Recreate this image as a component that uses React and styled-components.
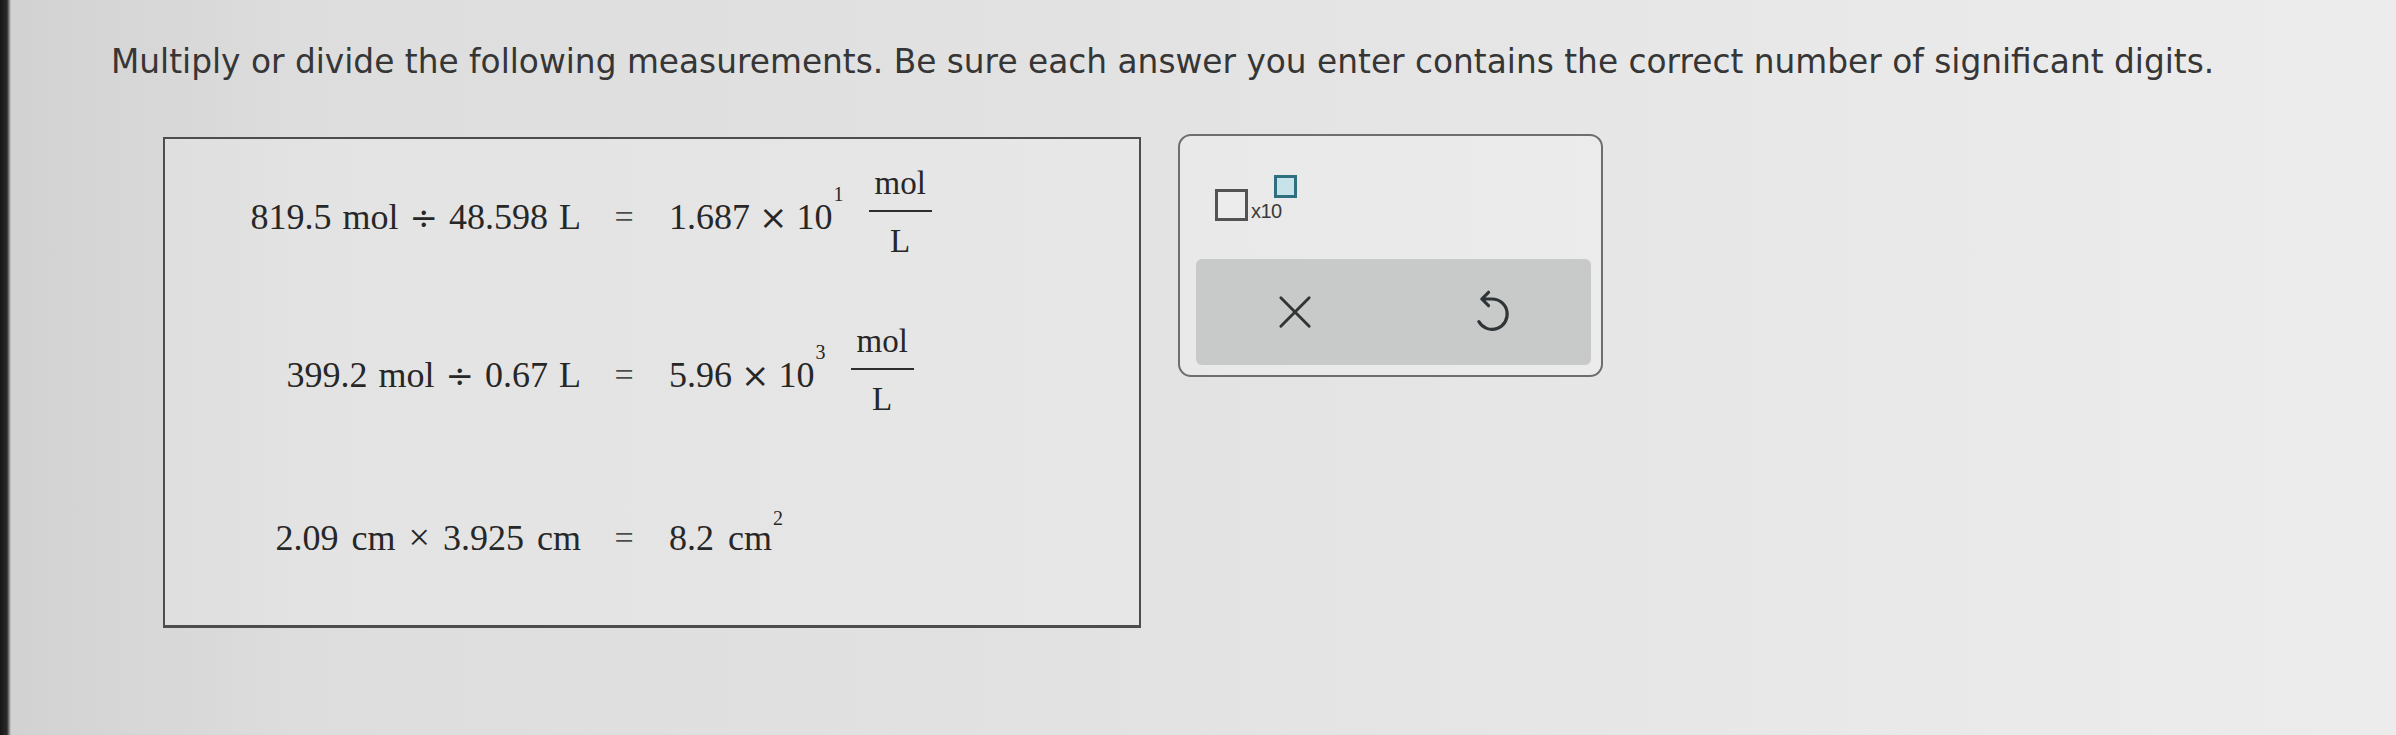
import styled, { createGlobalStyle } from "styled-components";

const GlobalStyle = createGlobalStyle`
  html, body {
    margin: 0;
    padding: 0;
  }
  body {
    width: 2396px;
    height: 735px;
    overflow: hidden;
    background: linear-gradient(
      90deg,
      #161616 0,
      #2b2b2b 7px,
      #d2d2d2 11px,
      #dddddd 300px,
      #e3e3e3 1200px,
      #e9e9e9 1900px,
      #ececec 100%
    );
  }
`;

// each side is a list of tokens; an object marks an operator glyph
const rows = [
  {
    gap: 11,
    rightGap: 9,
    left: ["819.5", "mol", { op: "÷", wide: true }, "48.598", "L"],
    right: ["1.687", { op: "×", wide: true }, "10"],
    exp: "1",
    raise: 28,
    frac: { top: "mol", bottom: "L" },
  },
  {
    gap: 11,
    rightGap: 9,
    left: ["399.2", "mol", { op: "÷", wide: true }, "0.67", "L"],
    right: ["5.96", { op: "×", wide: true }, "10"],
    exp: "3",
    raise: 28,
    frac: { top: "mol", bottom: "L" },
  },
  {
    gap: 13,
    rightGap: 14,
    left: ["2.09", "cm", { op: "×" }, "3.925", "cm"],
    right: ["8.2", "cm"],
    exp: "2",
    raise: 25,
    frac: null,
  },
];

function Tokens({ items }) {
  return items.map((t, i) =>
    typeof t === "string" ? (
      <span key={i}>{t}</span>
    ) : (
      <Op key={i} $wide={t.wide}>
        {t.op}
      </Op>
    )
  );
}

function UndoIcon() {
  return (
    <svg width="52" height="52" viewBox="0 0 24 24" fill="none">
      <path
        d="M10.4 2.9 7.3 6l3.1 3.1M7.3 6H12a7 7 0 1 1-6.1 10.4"
        stroke="#2f3436"
        strokeWidth="1.45"
        strokeLinecap="round"
        strokeLinejoin="round"
      />
    </svg>
  );
}

function CloseIcon() {
  return (
    <svg width="40" height="40" viewBox="0 0 24 24" fill="none">
      <path
        d="M3.5 3.5l17 17M20.5 3.5l-17 17"
        stroke="#2f3436"
        strokeWidth="1.7"
        strokeLinecap="round"
      />
    </svg>
  );
}

export default function App() {
  return (
    <>
      <GlobalStyle />
      <Page>
        <Prompt>
          Multiply or divide the following measurements. Be sure each answer
          you enter contains the correct number of significant digits.
        </Prompt>
        <Workspace>
          <ProblemBox>
            {rows.map((row, i) => (
              <Row key={i}>
                <LeftCell $gap={row.gap}>
                  <Tokens items={row.left} />
                </LeftCell>
                <EqCell>=</EqCell>
                <RightCell>
                  <Num $gap={row.rightGap}>
                    <Tokens items={row.right} />
                    <Sup $raise={row.raise} $pull={row.rightGap - 1}>
                      {row.exp}
                    </Sup>
                  </Num>
                  {row.frac && (
                    <Fraction>
                      <Numer>{row.frac.top}</Numer>
                      <Denom>{row.frac.bottom}</Denom>
                    </Fraction>
                  )}
                </RightCell>
              </Row>
            ))}
          </ProblemBox>

          <AnswerPanel>
            <InputRow>
              <BaseSlot />
              <TimesTen>x10</TimesTen>
              <ExpSlot />
            </InputRow>
            <ActionBar>
              <ActionBtn aria-label="clear">
                <CloseIcon />
              </ActionBtn>
              <ActionBtn aria-label="undo">
                <UndoIcon />
              </ActionBtn>
            </ActionBar>
          </AnswerPanel>
        </Workspace>
      </Page>
    </>
  );
}

const Page = styled.main`
    padding: 42px 0 0 111px;
    box-sizing: border-box;
  `,
  Prompt = styled.p`
    margin: 0;
    font-family: "DejaVu Sans", Verdana, sans-serif;
    font-size: 32.8px;
    line-height: 40px;
    color: #363636;
    white-space: nowrap;
  `,
  Workspace = styled.div`
    display: flex;
    align-items: flex-start;
    gap: 37px;
    margin-top: 52px;
    padding-left: 52px;
  `,
  ProblemBox = styled.section`
    width: 978px;
    height: 491px;
    margin-top: 3px;
    box-sizing: border-box;
    border: 2px solid #4d4d4d;
    border-bottom-width: 3px;
    background: rgba(255, 255, 255, 0.18);
    display: grid;
    grid-template-columns: 416px 86px 1fr;
    grid-template-rows: 155px 161px 166px;
    align-items: center;
    font-family: "Liberation Serif", "Times New Roman", serif;
    color: #272727;
  `,
  Row = styled.div`
    display: contents;
  `,
  LeftCell = styled.div`
    justify-self: end;
    display: flex;
    align-items: baseline;
    gap: ${(p) => p.$gap}px;
    font-size: 36px;
    line-height: 1;
    white-space: nowrap;
  `,
  Op = styled.span`
    font-family: ${(p) =>
      p.$wide
        ? `"DejaVu Serif", "Liberation Serif", serif`
        : `"Liberation Serif", serif`};
    font-size: ${(p) => (p.$wide ? "34px" : "38px")};
    line-height: 0;
  `,
  EqCell = styled.div`
    justify-self: center;
    font-size: 34px;
    line-height: 1;
    color: #4c4c4c;
  `,
  RightCell = styled.div`
    display: flex;
    align-items: center;
    padding-left: 2px;
  `,
  Num = styled.span`
    display: flex;
    align-items: baseline;
    gap: ${(p) => p.$gap}px;
    font-size: 36px;
    line-height: 1;
    white-space: nowrap;
  `,
  Sup = styled.span`
    font-size: 20px;
    line-height: 0;
    margin-left: -${(p) => p.$pull}px;
    transform: translateY(-${(p) => p.$raise}px);
  `,
  Fraction = styled.span`
    display: inline-flex;
    flex-direction: column;
    align-items: center;
    margin: 0 0 8px 25px;
    font-size: 33px;
    line-height: 1;
  `,
  Numer = styled.span`
    padding: 0 6px 10px;
    border-bottom: 2px solid #2e2e2e;
  `,
  Denom = styled.span`
    padding-top: 13px;
  `,
  AnswerPanel = styled.section`
    width: 425px;
    height: 243px;
    box-sizing: border-box;
    border: 2px solid #6e6e6e;
    border-radius: 13px;
    background: rgba(255, 255, 255, 0.22);
    display: flex;
    flex-direction: column;
  `,
  InputRow = styled.div`
    display: flex;
    align-items: flex-start;
    padding: 39px 0 0 35px;
    height: 46px;
  `,
  BaseSlot = styled.span`
    width: 33px;
    height: 32px;
    margin-top: 14px;
    box-sizing: border-box;
    border: 3px solid #535353;
    background: #ececec;
  `,
  TimesTen = styled.span`
    margin: 27px 0 0 3px;
    font-family: "Liberation Sans", Arial, sans-serif;
    font-size: 20px;
    line-height: 18px;
    letter-spacing: -0.5px;
    color: #3a3a3a;
  `,
  ExpSlot = styled.span`
    width: 23px;
    height: 23px;
    margin-left: -8px;
    box-sizing: border-box;
    border: 3px solid #2f6f80;
    background: #c8e2e9;
  `,
  ActionBar = styled.div`
    display: grid;
    grid-template-columns: 1fr 1fr;
    place-items: center;
    height: 106px;
    margin: 38px 10px 0 16px;
    border-radius: 6px;
    background: #c8c9c9;
  `,
  ActionBtn = styled.button`
    display: flex;
    align-items: center;
    justify-content: center;
    padding: 0;
    border: none;
    background: transparent;
    cursor: pointer;
  `;
